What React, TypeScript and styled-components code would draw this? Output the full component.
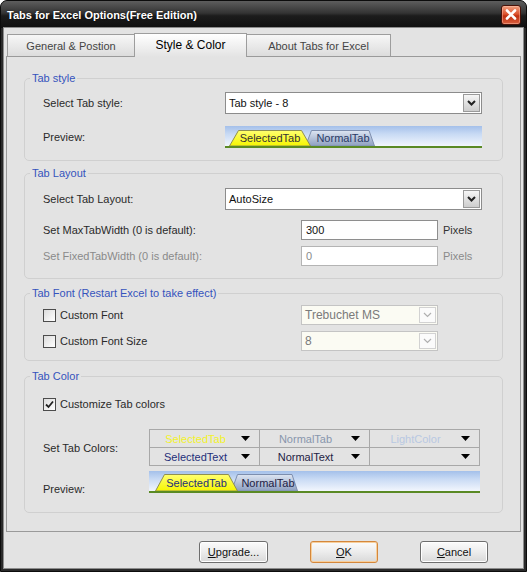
import React from "react";
import styled, { createGlobalStyle } from "styled-components";

const GlobalStyle = createGlobalStyle`
  html, body {
    margin: 0;
    padding: 0;
    background: #ffffff;
  }
  body {
    font-family: "Liberation Sans", Arial, sans-serif;
    font-size: 11px;
    color: #000;
  }
`;

const Window = styled.div`
  width: 527px;
  height: 572px;
  box-sizing: border-box;
  border: 1px solid #0c0c0c;
  border-radius: 7px 7px 0 0;
  background: #2a2a2a;
  display: flex;
  flex-direction: column;
  overflow: hidden;
`;

const TitleBar = styled.div`
  height: 27px;
  flex: none;
  display: flex;
  align-items: center;
  padding: 0 5px 0 6px;
  background: linear-gradient(#5e5e5e, #333333 45%, #1c1c1c 55%, #101010);
`;

const Title = styled.div`
  flex: 1;
  color: #ffffff;
  font-weight: bold;
  font-size: 11px;
  text-shadow: 0 0 2px rgba(0, 0, 0, 0.6);
`;

const CloseButton = styled.div`
  width: 20px;
  height: 20px;
  box-sizing: border-box;
  border: 1px solid #4a1208;
  border-radius: 3px;
  background: linear-gradient(#f0a080, #dd5430 45%, #c03010 55%, #d86040);
  box-shadow: inset 0 0 0 1px rgba(255, 200, 180, 0.45);
  display: flex;
  align-items: center;
  justify-content: center;
`;

const Client = styled.div`
  flex: 1;
  margin: 0 3px 3px;
  background: #e3e3e3;
  box-shadow: 0 0 0 1px #8c8c8c;
  padding: 5px 2px 0;
  display: flex;
  flex-direction: column;
`;

const TabStrip = styled.div`
  height: 23px;
  display: flex;
  align-items: flex-end;
  padding-left: 1px;
`;

const Tab = styled.div<{ $w: number; $active?: boolean; $first?: boolean }>`
  width: ${(p) => p.$w}px;
  height: ${(p) => (p.$active ? 24 : 22)}px;
  margin-bottom: ${(p) => (p.$active ? -1 : 0)}px;
  margin-left: ${(p) => (p.$first ? 0 : -1)}px;
  box-sizing: border-box;
  border: 1px solid #9d9d9d;
  border-bottom: none;
  position: relative;
  z-index: ${(p) => (p.$active ? 2 : 1)};
  display: flex;
  align-items: center;
  justify-content: center;
  padding-bottom: ${(p) => (p.$active ? 1 : 0)}px;
  font-size: ${(p) => (p.$active ? 12 : 11)}px;
  color: ${(p) => (p.$active ? "#000" : "#444")};
  background: ${(p) =>
    p.$active
      ? "linear-gradient(#ffffff, #e3e3e3)"
      : "linear-gradient(#f7f7f7, #dcdcdc)"};
`;

const Panel = styled.div`
  height: 476px;
  box-sizing: border-box;
  border: 1px solid #9a9a9a;
  padding: 21px 17px 0;
  display: flex;
  flex-direction: column;
`;

const Group = styled.div<{ $mt: number; $pt: number; $pb: number }>`
  position: relative;
  margin-top: ${(p) => p.$mt}px;
  border: 1px solid #d0d0d0;
  border-radius: 5px;
  padding: ${(p) => p.$pt}px 18px ${(p) => p.$pb}px;
  display: flex;
  flex-direction: column;
`;

const GroupTitle = styled.span`
  position: absolute;
  top: -8px;
  left: 5px;
  padding: 0 2px;
  line-height: 14px;
  background: #e3e3e3;
  color: #3553bd;
`;

const Row = styled.div<{ $cols: string; $h: number; $mt?: number }>`
  display: grid;
  grid-template-columns: ${(p) => p.$cols};
  height: ${(p) => p.$h}px;
  margin-top: ${(p) => p.$mt ?? 0}px;
  align-items: center;
`;

const Label = styled.span<{ $disabled?: boolean; $end?: boolean }>`
  color: ${(p) => (p.$disabled ? "#8a8a8a" : "#2a2a2a")};
  align-self: ${(p) => (p.$end ? "end" : "center")};
  margin-bottom: ${(p) => (p.$end ? -2 : 0)}px;
  white-space: nowrap;
`;

const SelectBox = styled.div<{ $w: number; $h: number; $disabled?: boolean }>`
  width: ${(p) => p.$w}px;
  height: ${(p) => p.$h}px;
  box-sizing: border-box;
  border: 1px solid ${(p) => (p.$disabled ? "#c4c4c4" : "#8c8c8c")};
  background: ${(p) => (p.$disabled ? "#fbfbf3" : "#ffffff")};
  color: ${(p) => (p.$disabled ? "#7a7a7a" : "#111")};
  display: flex;
  align-items: center;
  padding: 0 1px 0 3px;
  grid-column: ${(p) => (p.$disabled ? "auto" : "2 / -1")};
  font-size: ${(p) => (p.$disabled ? 12 : 11)}px;
`;

const SelectText = styled.span`
  flex: 1;
`;

const DropButton = styled.span<{ $disabled?: boolean }>`
  width: 17px;
  height: calc(100% - 2px);
  box-sizing: border-box;
  border: 1px solid ${(p) => (p.$disabled ? "#d2d2d2" : "#9a9a9a")};
  background: ${(p) =>
    p.$disabled ? "#fbfbfb" : "linear-gradient(#f6f6f6, #cdcdcd)"};
  display: flex;
  align-items: center;
  justify-content: center;
`;

const TextInput = styled.div<{ $disabled?: boolean }>`
  width: 137px;
  height: 20px;
  box-sizing: border-box;
  border: 1px solid ${(p) => (p.$disabled ? "#b4b4b4" : "#8e8e8e")};
  background: #ffffff;
  color: ${(p) => (p.$disabled ? "#8a8a8a" : "#111")};
  display: flex;
  align-items: center;
  padding-left: 4px;
  grid-column: 3;
`;

const Unit = styled.span<{ $disabled?: boolean }>`
  padding-left: 5px;
  color: ${(p) => (p.$disabled ? "#8a8a8a" : "#333")};
`;

const CheckLabel = styled.label`
  display: flex;
  align-items: center;
  gap: 4px;
  color: #2a2a2a;
`;

const CheckBox = styled.span`
  width: 13px;
  height: 13px;
  box-sizing: border-box;
  border: 1px solid #4c4c4c;
  background: linear-gradient(135deg, #dcdcdc, #ffffff);
  display: flex;
  align-items: center;
  justify-content: center;
`;

const ColorGrid = styled.div`
  width: 331px;
  box-sizing: border-box;
  display: grid;
  grid-template-columns: repeat(3, 1fr);
  border-top: 1px solid #a8a8a8;
  border-left: 1px solid #a8a8a8;
`;

const ColorCell = styled.div<{ $color: string }>`
  height: 18px;
  box-sizing: border-box;
  border-right: 1px solid #a8a8a8;
  border-bottom: 1px solid #a8a8a8;
  display: flex;
  align-items: center;
  padding-right: 9px;
  color: ${(p) => p.$color};
`;

const CellText = styled.span`
  flex: 1;
  text-align: center;
`;

const PreviewStrip = styled.div<{ $w: number; $pad: number }>`
  width: ${(p) => p.$w}px;
  height: 22px;
  box-sizing: border-box;
  border-bottom: 2px solid #5a8a24;
  background: linear-gradient(#a4c0ea, #c8daf4 40%, #f2f6fd);
  display: flex;
  align-items: flex-end;
  padding-left: ${(p) => p.$pad}px;
`;

const PTab = styled.span<{ $w: number; $h: number; $ml?: number; $z: number; $color: string }>`
  position: relative;
  width: ${(p) => p.$w}px;
  height: ${(p) => p.$h}px;
  margin-left: ${(p) => p.$ml ?? 0}px;
  z-index: ${(p) => p.$z};
  display: flex;
  align-items: center;
  justify-content: center;
  color: ${(p) => p.$color};
  white-space: nowrap;

  svg {
    position: absolute;
    inset: 0;
  }
  span {
    position: relative;
  }
`;

const ButtonBar = styled.div`
  display: flex;
  justify-content: flex-end;
  gap: 42px;
  padding: 9px 33px 0 0;
`;

const Button = styled.button<{ $w: number; $default?: boolean }>`
  width: ${(p) => p.$w}px;
  height: 22px;
  padding: 0;
  font-family: "Liberation Sans", Arial, sans-serif;
  font-size: 11px;
  color: #111;
  border: 1px solid ${(p) => (p.$default ? "#d4873c" : "#6e6e6e")};
  border-radius: 3px;
  background: linear-gradient(#fbfbfb, #ececec 50%, #d9d9d9);
  box-shadow: inset 0 0 0 1px ${(p) => (p.$default ? "#f7cf9c" : "#ffffff")};

  u {
    text-decoration: underline;
  }
`;

const Chevron = ({ disabled }: { disabled?: boolean }) => (
  <svg width="9" height="6" viewBox="0 0 9 6">
    <polyline
      points="1,1 4.5,4.5 8,1"
      fill="none"
      stroke={disabled ? "#b0b0b0" : "#222"}
      strokeWidth={disabled ? 1.2 : 2}
    />
  </svg>
);

const Triangle = () => (
  <svg width="9" height="5" viewBox="0 0 9 5">
    <polygon points="0,0 9,0 4.5,5" fill="#000" />
  </svg>
);

const Select = ({ value, w, h, disabled }: { value: string; w: number; h: number; disabled?: boolean }) => (
  <SelectBox $w={w} $h={h} $disabled={disabled}>
    <SelectText>{value}</SelectText>
    <DropButton $disabled={disabled}>
      <Chevron disabled={disabled} />
    </DropButton>
  </SelectBox>
);

const Check = ({ checked, text }: { checked?: boolean; text: string }) => (
  <CheckLabel>
    <CheckBox>
      {checked && (
        <svg width="9" height="9" viewBox="0 0 9 9">
          <polyline points="1,4.5 3.5,7 8,1.5" fill="none" stroke="#222" strokeWidth="1.8" />
        </svg>
      )}
    </CheckBox>
    {text}
  </CheckLabel>
);

type PreviewProps = {
  w: number;
  pad: number;
  selW: number;
  normW: number;
  overlap: number;
  h: number;
  selColor: string;
  normColor: string;
};

const Preview = ({ w, pad, selW, normW, overlap, h, selColor, normColor }: PreviewProps) => (
  <PreviewStrip $w={w} $pad={pad}>
    <PTab $w={selW} $h={h} $z={2} $color={selColor}>
      <svg width={selW} height={h} viewBox={`0 0 ${selW} ${h}`}>
        <defs>
          <linearGradient id={`sel${w}`} x1="0" y1="0" x2="0" y2="1">
            <stop offset="0" stopColor="#ffff70" />
            <stop offset="1" stopColor="#f6f600" />
          </linearGradient>
        </defs>
        <polygon
          points={`0.5,${h} 9.5,0.5 ${selW - 9.5},0.5 ${selW - 0.5},${h}`}
          fill={`url(#sel${w})`}
          stroke="#8f8f50"
          strokeWidth="1"
        />
      </svg>
      <span>SelectedTab</span>
    </PTab>
    <PTab $w={normW} $h={h} $ml={-overlap} $z={1} $color={normColor}>
      <svg width={normW} height={h} viewBox={`0 0 ${normW} ${h}`}>
        <defs>
          <linearGradient id={`norm${w}`} x1="0" y1="0" x2="0" y2="1">
            <stop offset="0" stopColor="#dde5f2" />
            <stop offset="1" stopColor="#8d9fc0" />
          </linearGradient>
        </defs>
        <polygon
          points={`0.5,${h} 6.5,0.5 ${normW - 6},0.5 ${normW - 0.5},${h}`}
          fill={`url(#norm${w})`}
          stroke="#7d8eae"
          strokeWidth="1"
        />
      </svg>
      <span style={{ paddingLeft: overlap }}>NormalTab</span>
    </PTab>
  </PreviewStrip>
);

export default function App() {
  return (
    <>
      <GlobalStyle />
      <Window>
        <TitleBar>
          <Title>Tabs for Excel Options(Free Edition)</Title>
          <CloseButton>
            <svg width="12" height="11" viewBox="0 0 12 11">
              <path d="M2 1.5 L10 9.5 M10 1.5 L2 9.5" stroke="#ffffff" strokeWidth="2.6" strokeLinecap="round" />
            </svg>
          </CloseButton>
        </TitleBar>
        <Client>
          <TabStrip>
            <Tab $w={128} $first>General &amp; Postion</Tab>
            <Tab $w={113} $active>Style &amp; Color</Tab>
            <Tab $w={145}>About Tabs for Excel</Tab>
          </TabStrip>
          <Panel>
            <Group $mt={0} $pt={13} $pb={12}>
              <GroupTitle>Tab style</GroupTitle>
              <Row $cols="182px 257px" $h={22}>
                <Label>Select Tab style:</Label>
                <Select value="Tab style - 8" w={257} h={22} />
              </Row>
              <Row $cols="182px 257px" $h={22} $mt={12}>
                <Label>Preview:</Label>
                <Preview w={257} pad={4} selW={82} normW={70} overlap={6} h={16} selColor="#333" normColor="#2a3a66" />
              </Row>
            </Group>

            <Group $mt={12} $pt={14} $pb={12}>
              <GroupTitle>Tab Layout</GroupTitle>
              <Row $cols="182px 76px 137px 44px" $h={22}>
                <Label>Select Tab Layout:</Label>
                <Select value="AutoSize" w={257} h={22} />
              </Row>
              <Row $cols="182px 76px 137px 44px" $h={20} $mt={10}>
                <Label>Set MaxTabWidth (0 is default):</Label>
                <TextInput>300</TextInput>
                <Unit>Pixels</Unit>
              </Row>
              <Row $cols="182px 76px 137px 44px" $h={20} $mt={6}>
                <Label $disabled>Set FixedTabWidth (0 is default):</Label>
                <TextInput $disabled>0</TextInput>
                <Unit $disabled>Pixels</Unit>
              </Row>
            </Group>

            <Group $mt={14} $pt={11} $pb={9}>
              <GroupTitle>Tab Font (Restart Excel to take effect)</GroupTitle>
              <Row $cols="258px 137px" $h={20}>
                <Check text="Custom Font" />
                <Select value="Trebuchet MS" w={137} h={20} disabled />
              </Row>
              <Row $cols="258px 137px" $h={20} $mt={6}>
                <Check text="Custom Font Size" />
                <Select value="8" w={137} h={20} disabled />
              </Row>
            </Group>

            <Group $mt={15} $pt={19} $pb={19}>
              <GroupTitle>Tab Color</GroupTitle>
              <Row $cols="1fr" $h={16}>
                <Check checked text="Customize Tab colors" />
              </Row>
              <Row $cols="106px 331px" $h={37} $mt={17}>
                <Label>Set Tab Colors:</Label>
                <ColorGrid>
                  <ColorCell $color="#f2f22a">
                    <CellText>SelectedTab</CellText>
                    <Triangle />
                  </ColorCell>
                  <ColorCell $color="#8896ad">
                    <CellText>NormalTab</CellText>
                    <Triangle />
                  </ColorCell>
                  <ColorCell $color="#b8c8e2">
                    <CellText>LightColor</CellText>
                    <Triangle />
                  </ColorCell>
                  <ColorCell $color="#1f2f7a">
                    <CellText>SelectedText</CellText>
                    <Triangle />
                  </ColorCell>
                  <ColorCell $color="#1e2244">
                    <CellText>NormalText</CellText>
                    <Triangle />
                  </ColorCell>
                  <ColorCell $color="#000">
                    <CellText />
                    <Triangle />
                  </ColorCell>
                </ColorGrid>
              </Row>
              <Row $cols="106px 331px" $h={22} $mt={5}>
                <Label $end>Preview:</Label>
                <Preview w={331} pad={6} selW={83} normW={67} overlap={7} h={17} selColor="#1f2f7a" normColor="#1e2244" />
              </Row>
            </Group>
          </Panel>
          <ButtonBar>
            <Button $w={69}>
              <u>U</u>pgrade...
            </Button>
            <Button $w={68} $default>
              <u>O</u>K
            </Button>
            <Button $w={68}>
              <u>C</u>ancel
            </Button>
          </ButtonBar>
        </Client>
      </Window>
    </>
  );
}
